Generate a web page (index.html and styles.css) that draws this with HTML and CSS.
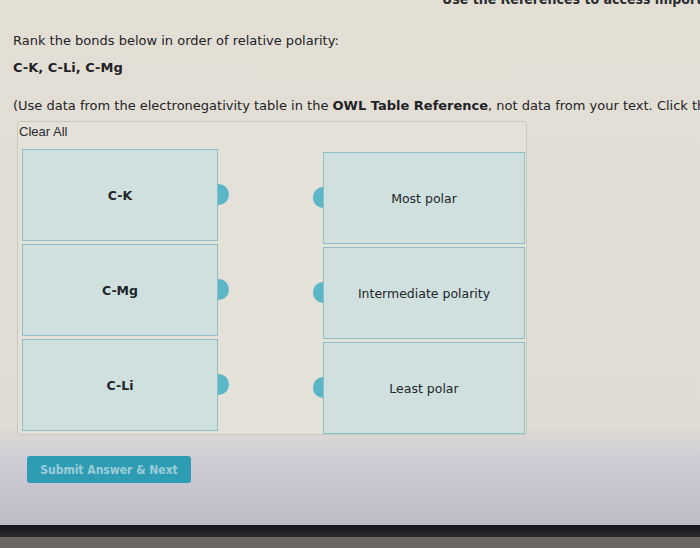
FILE: index.html
```html
<!DOCTYPE html>
<html>
<head>
<meta charset="utf-8">
<link rel="stylesheet" href="styles.css">
</head>
<body>
<div class="screen">
  <div class="refs"><span>Use the References to access important values if needed for this question.</span></div>
  <p class="q">Rank the bonds below in order of relative polarity:</p>
  <p class="q bold">C-K, C-Li, C-Mg</p>
  <p class="q note">(Use data from the electronegativity table in the <b>OWL Table Reference</b>, not data from your text. Click the "Clear All" button to reset.)</p>
  <div class="rank">
    <div class="clear">Clear All</div>
    <div class="cols">
      <div class="col left">
        <div class="item"><b>C-K</b></div>
        <div class="item"><b>C-Mg</b></div>
        <div class="item"><b>C-Li</b></div>
      </div>
      <div class="col right">
        <div class="slot">Most polar</div>
        <div class="slot">Intermediate polarity</div>
        <div class="slot">Least polar</div>
      </div>
    </div>
  </div>
  <div class="actions">
    <button class="submit">Submit Answer &amp; Next</button>
  </div>
</div>
<div class="bezel"></div>
<div class="desk"></div>
</body>
</html>
```
FILE: styles.css
```css
html, body {
  margin: 0;
  padding: 0;
}
body {
  width: 700px;
  height: 548px;
  overflow: hidden;
  font-family: "DejaVu Sans", Verdana, sans-serif;
  color: #1f2226;
  background: #6a6764;
}
.screen {
  height: 525px;
  overflow: hidden;
  background: linear-gradient(to bottom, #e3dfd5 0%, #dfdcd4 81%, #cfced5 87%, #c4c3cd 95%, #bdbcc7 100%);
}
.refs {
  height: 7px;
  overflow: hidden;
  display: flex;
  align-items: flex-end;
  padding-left: 442px;
  white-space: nowrap;
  font-family: "DejaVu Sans Condensed", "DejaVu Sans", sans-serif;
  font-weight: bold;
  font-size: 14px;
  line-height: 15px;
  color: #2a2c30;
}
.q {
  margin: 26px 0 0 13px;
  font-size: 13px;
  line-height: 16px;
  white-space: nowrap;
}
.bold {
  margin-top: 11px;
  font-weight: bold;
}
.note {
  margin-top: 22px;
}
.rank {
  margin: 7px 0 0 17px;
  width: 510px;
  height: 314px;
  background: #e4e1d8;
  border: 1px solid #cbc8bf;
  border-radius: 3px;
  box-sizing: border-box;
}
.clear {
  font-family: "Liberation Sans", Arial, sans-serif;
  font-size: 13px;
  line-height: 16px;
  padding: 2px 0 0 1px;
  height: 27px;
  box-sizing: border-box;
  color: #2a2c30;
}
.cols {
  display: flex;
  gap: 105px;
  padding-left: 4px;
}
.col {
  display: flex;
  flex-direction: column;
  gap: 3px;
}
.left {
  width: 196px;
}
.right {
  width: 202px;
  padding-top: 3px;
}
.item, .slot {
  position: relative;
  height: 92px;
  background: #cfe0de;
  border: 1px solid #8dbfc6;
  box-sizing: border-box;
  display: flex;
  align-items: center;
  justify-content: center;
  font-size: 12.5px;
  color: #22262a;
}
.item::after {
  content: "";
  position: absolute;
  right: -12px;
  top: 50%;
  margin-top: -11px;
  width: 11px;
  height: 21px;
  background: #5bb7c7;
  border-radius: 0 11px 11px 0;
}
.slot::before {
  content: "";
  position: absolute;
  left: -11px;
  top: 50%;
  margin-top: -11px;
  width: 10px;
  height: 21px;
  background: #5bb7c7;
  border-radius: 11px 0 0 11px;
}
.actions {
  padding: 21px 0 0 27px;
}
.submit {
  width: 164px;
  height: 27px;
  border: none;
  border-radius: 3px;
  background: #2e9db3;
  color: #9ccdd8;
  font-family: "DejaVu Sans Condensed", "DejaVu Sans", sans-serif;
  font-weight: bold;
  font-size: 12px;
  padding: 0;
}
.bezel {
  height: 12px;
  background: linear-gradient(to bottom, #15151a, #2a2a30);
}
.desk {
  height: 11px;
  background: #6a6764;
}
```
